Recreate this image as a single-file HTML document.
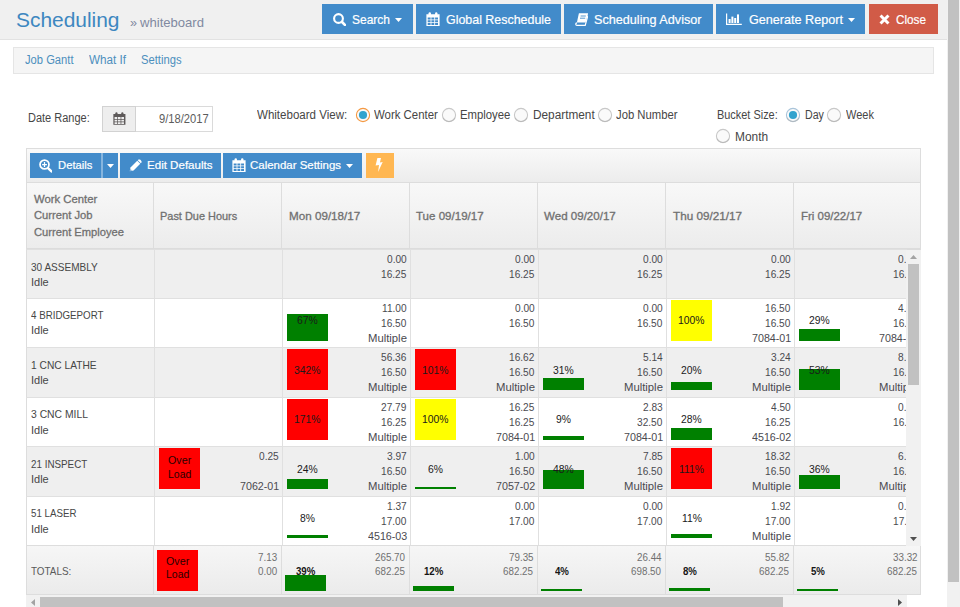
<!DOCTYPE html>
<html><head><meta charset="utf-8"><title>Scheduling whiteboard</title>
<style>
html,body{margin:0;padding:0;}
body{width:960px;height:607px;overflow:hidden;background:#fff;position:relative;font-family:"Liberation Sans",sans-serif;}
#pg{position:absolute;left:0;top:0;width:960px;height:607px;overflow:hidden;}
#pg div,#pg svg{position:absolute;box-sizing:border-box;}
.t{position:absolute;white-space:nowrap;transform-origin:0 50%;display:block;}
</style></head><body><div id="pg">

<div style="left:0px;top:0px;width:947px;height:40px;background:#f0f0f0;border-bottom:1px solid #e2e2e2;"></div>
<div style="left:947px;top:0px;width:13px;height:607px;background:#f1f1f1;"></div>
<div style="left:948px;top:0px;width:11px;height:582px;background:#c1c1c1;"></div>
<div style="left:322px;top:4px;width:91px;height:30px;background:#428bca;"></div>
<svg style="left:333.0px;top:13.2px" width="13" height="13" viewBox="0 0 13 13"><circle cx="5.5" cy="5.5" r="4.4" fill="none" stroke="#fff" stroke-width="2.1"/><path d="M9 9 L11.9 11.9" stroke="#fff" stroke-width="2.7" stroke-linecap="round"/></svg>
<svg style="left:395.3px;top:18.3px" width="7" height="4" viewBox="0 0 7 4"><path d="M0 0 H7 L3.5 4 Z" fill="#fff"/></svg>
<div style="left:416px;top:4px;width:145px;height:30px;background:#428bca;"></div>
<svg style="left:426.4px;top:12.0px" width="14" height="14" viewBox="0 0 14 14"><path fill="#fff" fill-rule="evenodd" d="M0.4 2.3 H13.6 V14 H0.4 Z M1.70 5.60 h2.9 v1.95 h-2.9 Z M5.40 5.60 h2.9 v1.95 h-2.9 Z M9.10 5.60 h2.9 v1.95 h-2.9 Z M1.70 8.35 h2.9 v1.95 h-2.9 Z M5.40 8.35 h2.9 v1.95 h-2.9 Z M9.10 8.35 h2.9 v1.95 h-2.9 Z M1.70 11.10 h2.9 v1.95 h-2.9 Z M5.40 11.10 h2.9 v1.95 h-2.9 Z M9.10 11.10 h2.9 v1.95 h-2.9 Z "/><rect x="2.6" y="0.2" width="2.3" height="4.2" rx="1.1" fill="#fff"/><rect x="9.1" y="0.2" width="2.3" height="4.2" rx="1.1" fill="#fff"/></svg>
<div style="left:564px;top:4px;width:148.5px;height:30px;background:#428bca;"></div>
<svg style="left:575.3px;top:12.8px" width="13" height="13" viewBox="0 0 13 13"><path fill="#fff" d="M3.9 0.3 H12.6 C13 0.3 13.1 0.6 13 1 L10.6 9.6 H1.9 Z"/><path fill="none" stroke="#fff" stroke-width="1.2" d="M2 9.8 C0.3 10 0.4 12.4 2 12.4 H10.2 L12.9 2.6"/><path stroke="#428bca" stroke-width="0.9" d="M5.6 3 H10.8 M5 5.2 H10.2"/></svg>
<div style="left:716px;top:4px;width:149px;height:30px;background:#428bca;"></div>
<svg style="left:726.0px;top:13.0px" width="16" height="12" viewBox="0 0 16 12"><path fill="none" stroke="#fff" stroke-width="1.2" d="M0.6 0.5 V11.4 H15.8"/><rect x="2.6" y="6" width="2" height="4" fill="#fff"/><rect x="5.4" y="3.6" width="2" height="6.4" fill="#fff"/><rect x="8.2" y="5" width="2" height="5" fill="#fff"/><rect x="11" y="1.4" width="2" height="8.6" fill="#fff"/></svg>
<svg style="left:848.0px;top:18.3px" width="7" height="4" viewBox="0 0 7 4"><path d="M0 0 H7 L3.5 4 Z" fill="#fff"/></svg>
<div style="left:869px;top:4px;width:69px;height:30px;background:#d15b47;"></div>
<svg style="left:879.0px;top:13.899999999999999px" width="11" height="11" viewBox="0 0 10 10"><path d="M1.4 1.4 L8.6 8.6 M8.6 1.4 L1.4 8.6" stroke="#fff" stroke-width="2.7"/></svg>
<div style="left:13px;top:47px;width:921px;height:27px;background:#f5f5f5;border:1px solid #e5e5e5;"></div>
<div style="left:102px;top:106px;width:111px;height:26px;background:#fff;border:1px solid #dadada;"></div>
<div style="left:102px;top:106px;width:34px;height:26px;background:#eeeeee;border:1px solid #d2d2d2;"></div>
<svg style="left:112.8px;top:112.1px" width="12.8" height="12.8" viewBox="0 0 14 14"><path fill="#5e5a5a" fill-rule="evenodd" d="M0.4 2.3 H13.6 V14 H0.4 Z M1.70 5.60 h2.9 v1.95 h-2.9 Z M5.40 5.60 h2.9 v1.95 h-2.9 Z M9.10 5.60 h2.9 v1.95 h-2.9 Z M1.70 8.35 h2.9 v1.95 h-2.9 Z M5.40 8.35 h2.9 v1.95 h-2.9 Z M9.10 8.35 h2.9 v1.95 h-2.9 Z M1.70 11.10 h2.9 v1.95 h-2.9 Z M5.40 11.10 h2.9 v1.95 h-2.9 Z M9.10 11.10 h2.9 v1.95 h-2.9 Z "/><rect x="2.6" y="0.2" width="2.3" height="4.2" rx="1.1" fill="#5e5a5a"/><rect x="9.1" y="0.2" width="2.3" height="4.2" rx="1.1" fill="#5e5a5a"/></svg>
<svg style="left:355.1px;top:106.5px" width="16" height="16" viewBox="0 0 16 16"><circle cx="8" cy="8" r="6.6" fill="#fafafa" stroke="#f59942" stroke-width="1.1"/><circle cx="8" cy="8" r="4.1" fill="#32a3ce"/></svg>
<svg style="left:440.5px;top:106.7px" width="16" height="16" viewBox="0 0 16 16"><circle cx="8" cy="8" r="6.6" fill="#fafafa" stroke="#c8c8c8" stroke-width="1.1"/><path d="M2.2 11 A6.6 6.6 0 0 0 13.8 11" fill="none" stroke="#b4b4b4" stroke-width="1.1" opacity="0.7"/></svg>
<svg style="left:513.2px;top:107px" width="16" height="16" viewBox="0 0 16 16"><circle cx="8" cy="8" r="6.6" fill="#fafafa" stroke="#c8c8c8" stroke-width="1.1"/><path d="M2.2 11 A6.6 6.6 0 0 0 13.8 11" fill="none" stroke="#b4b4b4" stroke-width="1.1" opacity="0.7"/></svg>
<svg style="left:596.5px;top:107px" width="16" height="16" viewBox="0 0 16 16"><circle cx="8" cy="8" r="6.6" fill="#fafafa" stroke="#c8c8c8" stroke-width="1.1"/><path d="M2.2 11 A6.6 6.6 0 0 0 13.8 11" fill="none" stroke="#b4b4b4" stroke-width="1.1" opacity="0.7"/></svg>
<svg style="left:785px;top:107px" width="16" height="16" viewBox="0 0 16 16"><circle cx="8" cy="8" r="6.6" fill="#fafafa" stroke="#a9c4da" stroke-width="1.1"/><path d="M2.2 11 A6.6 6.6 0 0 0 13.8 11" fill="none" stroke="#b4b4b4" stroke-width="1.1" opacity="0.7"/><circle cx="8" cy="8" r="4.1" fill="#32a3ce"/></svg>
<svg style="left:826.4px;top:107px" width="16" height="16" viewBox="0 0 16 16"><circle cx="8" cy="8" r="6.6" fill="#fafafa" stroke="#c8c8c8" stroke-width="1.1"/><path d="M2.2 11 A6.6 6.6 0 0 0 13.8 11" fill="none" stroke="#b4b4b4" stroke-width="1.1" opacity="0.7"/></svg>
<svg style="left:715px;top:128.4px" width="16" height="16" viewBox="0 0 16 16"><circle cx="8" cy="8" r="6.6" fill="#fafafa" stroke="#c8c8c8" stroke-width="1.1"/><path d="M2.2 11 A6.6 6.6 0 0 0 13.8 11" fill="none" stroke="#b4b4b4" stroke-width="1.1" opacity="0.7"/></svg>
<div style="left:26px;top:148px;width:895px;height:35px;background:linear-gradient(#f9f9f9,#ececec);border:1px solid #dddddd;"></div>
<div style="left:30px;top:153px;width:71px;height:25px;background:#428bca;"></div>
<div style="left:101px;top:153px;width:2px;height:25px;background:#86b5de;"></div>
<svg style="left:38.95px;top:159.05px" width="13.5" height="13.5" viewBox="0 0 13 13"><circle cx="5.3" cy="5.3" r="4.3" fill="none" stroke="#fff" stroke-width="1.7"/><path d="M8.7 8.7 L12 12" stroke="#fff" stroke-width="2.3" stroke-linecap="round"/><path d="M3 5.3 H7.6 M5.3 3 V7.6" stroke="#fff" stroke-width="1.2"/></svg>
<div style="left:103px;top:153px;width:15px;height:25px;background:#428bca;"></div>
<svg style="left:107.0px;top:164.0px" width="7" height="4" viewBox="0 0 7 4"><path d="M0 0 H7 L3.5 4 Z" fill="#fff"/></svg>
<div style="left:120px;top:153px;width:101px;height:25px;background:#428bca;"></div>
<svg style="left:128.8px;top:158.5px" width="13" height="13" viewBox="0 0 12 12"><path fill="#fff" d="M7.6 1.6 L10.4 4.4 L4.2 10.6 L0.7 11.3 L1.4 7.8 Z"/><path fill="#fff" d="M8.4 0.8 C9 0.2 9.9 0.2 10.5 0.8 L11.2 1.5 C11.8 2.1 11.8 3 11.2 3.6 L10.9 3.9 L8.1 1.1 Z"/><path fill="#428bca" d="M1.3 9.3 L2.7 10.7 L1 11 Z" opacity="0.9"/></svg>
<div style="left:223px;top:153px;width:139px;height:25px;background:#428bca;"></div>
<svg style="left:231.9px;top:157.9px" width="14" height="14" viewBox="0 0 14 14"><path fill="#fff" fill-rule="evenodd" d="M0.4 2.3 H13.6 V14 H0.4 Z M1.70 5.60 h2.9 v1.95 h-2.9 Z M5.40 5.60 h2.9 v1.95 h-2.9 Z M9.10 5.60 h2.9 v1.95 h-2.9 Z M1.70 8.35 h2.9 v1.95 h-2.9 Z M5.40 8.35 h2.9 v1.95 h-2.9 Z M9.10 8.35 h2.9 v1.95 h-2.9 Z M1.70 11.10 h2.9 v1.95 h-2.9 Z M5.40 11.10 h2.9 v1.95 h-2.9 Z M9.10 11.10 h2.9 v1.95 h-2.9 Z "/><rect x="2.6" y="0.2" width="2.3" height="4.2" rx="1.1" fill="#fff"/><rect x="9.1" y="0.2" width="2.3" height="4.2" rx="1.1" fill="#fff"/></svg>
<svg style="left:346.0px;top:164.0px" width="7" height="4" viewBox="0 0 7 4"><path d="M0 0 H7 L3.5 4 Z" fill="#fff"/></svg>
<div style="left:366px;top:153px;width:28px;height:25px;background:#ffb752;"></div>
<svg style="left:375.0px;top:158.4px" width="8" height="14" viewBox="0 0 8 14"><path fill="#fff" d="M2.4 0 H6 L4.9 4.4 L7.7 3.9 L3.1 14 L4 7 L0.6 7.6 Z"/></svg>
<div style="left:26px;top:182px;width:895px;height:68px;background:linear-gradient(#f8f8f8,#ececec);border:1px solid #dddddd;border-bottom:2px solid #dcdcdc;"></div>
<div style="left:153px;top:183px;width:1px;height:65px;background:#dddddd;"></div>
<div style="left:281px;top:183px;width:1px;height:65px;background:#dddddd;"></div>
<div style="left:409px;top:183px;width:1px;height:65px;background:#dddddd;"></div>
<div style="left:537px;top:183px;width:1px;height:65px;background:#dddddd;"></div>
<div style="left:665px;top:183px;width:1px;height:65px;background:#dddddd;"></div>
<div style="left:793px;top:183px;width:1px;height:65px;background:#dddddd;"></div>
<div style="left:26px;top:249px;width:881px;height:49px;background:#efefef;border-top:1px solid #e0e0e0;border-left:1px solid #dddddd;"></div>
<div style="left:154px;top:249px;width:1px;height:49px;background:#e0e0e0;"></div>
<div style="left:282px;top:249px;width:1px;height:49px;background:#e0e0e0;"></div>
<div style="left:410px;top:249px;width:1px;height:49px;background:#e0e0e0;"></div>
<div style="left:538px;top:249px;width:1px;height:49px;background:#e0e0e0;"></div>
<div style="left:666px;top:249px;width:1px;height:49px;background:#e0e0e0;"></div>
<div style="left:794px;top:249px;width:1px;height:49px;background:#e0e0e0;"></div>
<div style="left:26px;top:298px;width:881px;height:49px;background:#ffffff;border-top:1px solid #e0e0e0;border-left:1px solid #dddddd;"></div>
<div style="left:154px;top:298px;width:1px;height:49px;background:#e0e0e0;"></div>
<div style="left:282px;top:298px;width:1px;height:49px;background:#e0e0e0;"></div>
<div style="left:410px;top:298px;width:1px;height:49px;background:#e0e0e0;"></div>
<div style="left:538px;top:298px;width:1px;height:49px;background:#e0e0e0;"></div>
<div style="left:666px;top:298px;width:1px;height:49px;background:#e0e0e0;"></div>
<div style="left:794px;top:298px;width:1px;height:49px;background:#e0e0e0;"></div>
<div style="left:26px;top:347px;width:881px;height:50px;background:#efefef;border-top:1px solid #e0e0e0;border-left:1px solid #dddddd;"></div>
<div style="left:154px;top:347px;width:1px;height:50px;background:#e0e0e0;"></div>
<div style="left:282px;top:347px;width:1px;height:50px;background:#e0e0e0;"></div>
<div style="left:410px;top:347px;width:1px;height:50px;background:#e0e0e0;"></div>
<div style="left:538px;top:347px;width:1px;height:50px;background:#e0e0e0;"></div>
<div style="left:666px;top:347px;width:1px;height:50px;background:#e0e0e0;"></div>
<div style="left:794px;top:347px;width:1px;height:50px;background:#e0e0e0;"></div>
<div style="left:26px;top:397px;width:881px;height:49px;background:#ffffff;border-top:1px solid #e0e0e0;border-left:1px solid #dddddd;"></div>
<div style="left:154px;top:397px;width:1px;height:49px;background:#e0e0e0;"></div>
<div style="left:282px;top:397px;width:1px;height:49px;background:#e0e0e0;"></div>
<div style="left:410px;top:397px;width:1px;height:49px;background:#e0e0e0;"></div>
<div style="left:538px;top:397px;width:1px;height:49px;background:#e0e0e0;"></div>
<div style="left:666px;top:397px;width:1px;height:49px;background:#e0e0e0;"></div>
<div style="left:794px;top:397px;width:1px;height:49px;background:#e0e0e0;"></div>
<div style="left:26px;top:446px;width:881px;height:50px;background:#efefef;border-top:1px solid #e0e0e0;border-left:1px solid #dddddd;"></div>
<div style="left:154px;top:446px;width:1px;height:50px;background:#e0e0e0;"></div>
<div style="left:282px;top:446px;width:1px;height:50px;background:#e0e0e0;"></div>
<div style="left:410px;top:446px;width:1px;height:50px;background:#e0e0e0;"></div>
<div style="left:538px;top:446px;width:1px;height:50px;background:#e0e0e0;"></div>
<div style="left:666px;top:446px;width:1px;height:50px;background:#e0e0e0;"></div>
<div style="left:794px;top:446px;width:1px;height:50px;background:#e0e0e0;"></div>
<div style="left:26px;top:496px;width:881px;height:50px;background:#ffffff;border-top:1px solid #e0e0e0;border-left:1px solid #dddddd;"></div>
<div style="left:154px;top:496px;width:1px;height:50px;background:#e0e0e0;"></div>
<div style="left:282px;top:496px;width:1px;height:50px;background:#e0e0e0;"></div>
<div style="left:410px;top:496px;width:1px;height:50px;background:#e0e0e0;"></div>
<div style="left:538px;top:496px;width:1px;height:50px;background:#e0e0e0;"></div>
<div style="left:666px;top:496px;width:1px;height:50px;background:#e0e0e0;"></div>
<div style="left:794px;top:496px;width:1px;height:50px;background:#e0e0e0;"></div>
<div style="left:287px;top:314px;width:41px;height:27px;background:#008000;"></div>
<div style="left:671px;top:300px;width:41px;height:41px;background:#ffff00;"></div>
<div style="left:799px;top:329px;width:41px;height:12px;background:#008000;"></div>
<div style="left:287px;top:349px;width:41px;height:41px;background:#ff0000;"></div>
<div style="left:415px;top:349px;width:41px;height:41px;background:#ff0000;"></div>
<div style="left:543px;top:378px;width:41px;height:12px;background:#008000;"></div>
<div style="left:671px;top:382px;width:41px;height:8px;background:#008000;"></div>
<div style="left:799px;top:369px;width:41px;height:21px;background:#008000;"></div>
<div style="left:287px;top:399px;width:41px;height:41px;background:#ff0000;"></div>
<div style="left:415px;top:399px;width:41px;height:41px;background:#ffff00;"></div>
<div style="left:543px;top:436px;width:41px;height:4px;background:#008000;"></div>
<div style="left:671px;top:428px;width:41px;height:12px;background:#008000;"></div>
<div style="left:159px;top:448px;width:41px;height:41px;background:#ff0000;"></div>
<div style="left:287px;top:479px;width:41px;height:10px;background:#008000;"></div>
<div style="left:415px;top:487px;width:41px;height:2px;background:#008000;"></div>
<div style="left:543px;top:470px;width:41px;height:19px;background:#008000;"></div>
<div style="left:671px;top:448px;width:41px;height:41px;background:#ff0000;"></div>
<div style="left:799px;top:475px;width:41px;height:14px;background:#008000;"></div>
<div style="left:287px;top:535px;width:41px;height:3px;background:#008000;"></div>
<div style="left:671px;top:534px;width:41px;height:4px;background:#008000;"></div>
<div style="left:26px;top:545px;width:895px;height:50px;background:linear-gradient(#f6f6f6,#ebebeb);border:1px solid #dddddd;"></div>
<div style="left:153px;top:546px;width:1px;height:48px;background:#dddddd;"></div>
<div style="left:281px;top:546px;width:1px;height:48px;background:#dddddd;"></div>
<div style="left:409px;top:546px;width:1px;height:48px;background:#dddddd;"></div>
<div style="left:537px;top:546px;width:1px;height:48px;background:#dddddd;"></div>
<div style="left:665px;top:546px;width:1px;height:48px;background:#dddddd;"></div>
<div style="left:793px;top:546px;width:1px;height:48px;background:#dddddd;"></div>
<div style="left:157px;top:550px;width:41px;height:41px;background:#ff0000;"></div>
<div style="left:285px;top:575px;width:41px;height:16px;background:#008000;"></div>
<div style="left:413px;top:586px;width:41px;height:5px;background:#008000;"></div>
<div style="left:541px;top:589px;width:41px;height:2px;background:#008000;"></div>
<div style="left:669px;top:588px;width:41px;height:3px;background:#008000;"></div>
<div style="left:797px;top:589px;width:41px;height:2px;background:#008000;"></div>
<div style="left:26px;top:595px;width:881px;height:12px;background:#f1f1f1;"></div>
<div style="left:40px;top:597px;width:743px;height:10px;background:#c1c1c1;"></div>
<svg style="left:30.5px;top:599px" width="4" height="7" viewBox="0 0 4 7"><path d="M4 0 V7 L0 3.5 Z" fill="#a3a3a3"/></svg>
<svg style="left:897.5px;top:599px" width="4" height="7" viewBox="0 0 4 7"><path d="M0 0 V7 L4 3.5 Z" fill="#505050"/></svg>
<span class="t" style="top:5.80px;line-height:28px;font-size:19.8px;color:#3d87c0;left:16.00px;transform:scaleX(1.0573);">Scheduling</span>
<span class="t" style="top:13.00px;line-height:19px;font-size:13px;color:#8089a0;left:129.50px;transform:scaleX(0.9676);">»</span>
<span class="t" style="top:12.50px;line-height:20px;font-size:13.5px;color:#8089a0;left:140.00px;transform:scaleX(0.9690);">whiteboard</span>
<span class="t" style="top:9.70px;line-height:19px;font-size:13px;color:#fff;-webkit-text-stroke:0.2px #fff;left:351.60px;transform:scaleX(0.9223);">Search</span>
<span class="t" style="top:9.70px;line-height:19px;font-size:13px;color:#fff;-webkit-text-stroke:0.2px #fff;left:445.50px;transform:scaleX(0.9558);">Global Reschedule</span>
<span class="t" style="top:9.70px;line-height:19px;font-size:13px;color:#fff;-webkit-text-stroke:0.2px #fff;left:594.00px;transform:scaleX(0.9722);">Scheduling Advisor</span>
<span class="t" style="top:9.70px;line-height:19px;font-size:13px;color:#fff;-webkit-text-stroke:0.2px #fff;left:748.50px;transform:scaleX(0.9706);">Generate Report</span>
<span class="t" style="top:9.70px;line-height:19px;font-size:13px;color:#fff;-webkit-text-stroke:0.2px #fff;left:896.00px;transform:scaleX(0.9023);">Close</span>
<span class="t" style="top:51.00px;line-height:18px;font-size:12px;color:#4c8fbd;left:24.50px;transform:scaleX(0.9321);">Job Gantt</span>
<span class="t" style="top:51.00px;line-height:18px;font-size:12px;color:#4c8fbd;left:88.50px;transform:scaleX(0.9733);">What If</span>
<span class="t" style="top:51.00px;line-height:18px;font-size:12px;color:#4c8fbd;left:141.00px;transform:scaleX(0.9341);">Settings</span>
<span class="t" style="top:108.50px;line-height:18px;font-size:12px;color:#464646;left:27.50px;transform:scaleX(0.9156);">Date Range:</span>
<span class="t" style="top:109.90px;line-height:18px;font-size:12px;color:#5c5c5c;left:159.00px;transform:scaleX(0.9309);">9/18/2017</span>
<span class="t" style="top:106.00px;line-height:18px;font-size:12px;color:#464646;left:256.50px;transform:scaleX(0.9613);">Whiteboard View:</span>
<span class="t" style="top:106.00px;line-height:18px;font-size:12px;color:#464646;left:374.00px;transform:scaleX(0.9517);">Work Center</span>
<span class="t" style="top:106.00px;line-height:18px;font-size:12px;color:#464646;left:459.60px;transform:scaleX(0.9443);">Employee</span>
<span class="t" style="top:106.00px;line-height:18px;font-size:12px;color:#464646;left:532.50px;transform:scaleX(0.9840);">Department</span>
<span class="t" style="top:106.00px;line-height:18px;font-size:12px;color:#464646;left:616.00px;transform:scaleX(0.9407);">Job Number</span>
<span class="t" style="top:106.00px;line-height:18px;font-size:12px;color:#464646;left:716.80px;transform:scaleX(0.9100);">Bucket Size:</span>
<span class="t" style="top:106.00px;line-height:18px;font-size:12px;color:#464646;left:805.10px;transform:scaleX(0.8855);">Day</span>
<span class="t" style="top:106.00px;line-height:18px;font-size:12px;color:#464646;left:845.80px;transform:scaleX(0.9157);">Week</span>
<span class="t" style="top:127.50px;line-height:18px;font-size:12px;color:#464646;left:735.20px;transform:scaleX(0.9922);">Month</span>
<span class="t" style="top:157.10px;line-height:17px;font-size:11.2px;color:#fff;-webkit-text-stroke:0.2px #fff;left:57.60px;transform:scaleX(1.0058);">Details</span>
<span class="t" style="top:157.10px;line-height:17px;font-size:11.2px;color:#fff;-webkit-text-stroke:0.2px #fff;left:146.50px;transform:scaleX(1.0325);">Edit Defaults</span>
<span class="t" style="top:157.10px;line-height:17px;font-size:11.2px;color:#fff;-webkit-text-stroke:0.2px #fff;left:250.00px;transform:scaleX(1.0232);">Calendar Settings</span>
<span class="t" style="top:190.50px;line-height:17px;font-size:11.4px;color:#707070;-webkit-text-stroke:0.3px #707070;left:33.70px;transform:scaleX(0.9932);">Work Center</span>
<span class="t" style="top:207.30px;line-height:17px;font-size:11.4px;color:#707070;-webkit-text-stroke:0.3px #707070;left:33.70px;transform:scaleX(0.9829);">Current Job</span>
<span class="t" style="top:224.10px;line-height:17px;font-size:11.4px;color:#707070;-webkit-text-stroke:0.3px #707070;left:33.70px;transform:scaleX(0.9803);">Current Employee</span>
<span class="t" style="top:207.60px;line-height:17px;font-size:11.4px;color:#707070;-webkit-text-stroke:0.3px #707070;left:160.30px;transform:scaleX(0.9601);">Past Due Hours</span>
<span class="t" style="top:207.60px;line-height:17px;font-size:11.4px;color:#707070;-webkit-text-stroke:0.3px #707070;left:288.80px;transform:scaleX(1.0234);">Mon 09/18/17</span>
<span class="t" style="top:207.60px;line-height:17px;font-size:11.4px;color:#707070;-webkit-text-stroke:0.3px #707070;left:416.30px;transform:scaleX(1.0132);">Tue 09/19/17</span>
<span class="t" style="top:207.60px;line-height:17px;font-size:11.4px;color:#707070;-webkit-text-stroke:0.3px #707070;left:544.40px;transform:scaleX(1.0153);">Wed 09/20/17</span>
<span class="t" style="top:207.60px;line-height:17px;font-size:11.4px;color:#707070;-webkit-text-stroke:0.3px #707070;left:672.60px;transform:scaleX(1.0277);">Thu 09/21/17</span>
<span class="t" style="top:207.60px;line-height:17px;font-size:11.4px;color:#707070;-webkit-text-stroke:0.3px #707070;left:800.80px;transform:scaleX(1.0066);">Fri 09/22/17</span>
<span class="t" style="top:258.60px;line-height:17px;font-size:11.5px;color:#464646;left:30.80px;transform:scaleX(0.8719);">30 ASSEMBLY</span>
<span class="t" style="top:273.80px;line-height:17px;font-size:11.5px;color:#464646;left:30.80px;transform:scaleX(0.9543);">Idle</span>
<span class="t" style="top:306.90px;line-height:17px;font-size:11.5px;color:#464646;left:30.80px;transform:scaleX(0.8487);">4 BRIDGEPORT</span>
<span class="t" style="top:322.30px;line-height:17px;font-size:11.5px;color:#464646;left:30.80px;transform:scaleX(0.9543);">Idle</span>
<span class="t" style="top:356.50px;line-height:17px;font-size:11.5px;color:#464646;left:30.80px;transform:scaleX(0.8874);">1 CNC LATHE</span>
<span class="t" style="top:371.70px;line-height:17px;font-size:11.5px;color:#464646;left:30.80px;transform:scaleX(0.9543);">Idle</span>
<span class="t" style="top:406.10px;line-height:17px;font-size:11.5px;color:#464646;left:30.80px;transform:scaleX(0.9007);">3 CNC MILL</span>
<span class="t" style="top:421.50px;line-height:17px;font-size:11.5px;color:#464646;left:30.80px;transform:scaleX(0.9543);">Idle</span>
<span class="t" style="top:455.50px;line-height:17px;font-size:11.5px;color:#464646;left:30.80px;transform:scaleX(0.8545);">21 INSPECT</span>
<span class="t" style="top:470.70px;line-height:17px;font-size:11.5px;color:#464646;left:30.80px;transform:scaleX(0.9543);">Idle</span>
<span class="t" style="top:505.00px;line-height:17px;font-size:11.5px;color:#464646;left:30.80px;transform:scaleX(0.8454);">51 LASER</span>
<span class="t" style="top:520.50px;line-height:17px;font-size:11.5px;color:#464646;left:30.80px;transform:scaleX(0.9543);">Idle</span>
<span class="t" style="top:250.70px;line-height:17px;font-size:11.5px;color:#4a4a50;left:387.10px;transform:scaleX(0.8800);">0.00</span>
<span class="t" style="top:265.80px;line-height:17px;font-size:11.5px;color:#4a4a50;left:381.47px;transform:scaleX(0.8800);">16.25</span>
<span class="t" style="top:250.70px;line-height:17px;font-size:11.5px;color:#4a4a50;left:515.10px;transform:scaleX(0.8800);">0.00</span>
<span class="t" style="top:265.80px;line-height:17px;font-size:11.5px;color:#4a4a50;left:509.47px;transform:scaleX(0.8800);">16.25</span>
<span class="t" style="top:250.70px;line-height:17px;font-size:11.5px;color:#4a4a50;left:643.10px;transform:scaleX(0.8800);">0.00</span>
<span class="t" style="top:265.80px;line-height:17px;font-size:11.5px;color:#4a4a50;left:637.47px;transform:scaleX(0.8800);">16.25</span>
<span class="t" style="top:250.70px;line-height:17px;font-size:11.5px;color:#4a4a50;left:771.10px;transform:scaleX(0.8800);">0.00</span>
<span class="t" style="top:265.80px;line-height:17px;font-size:11.5px;color:#4a4a50;left:765.47px;transform:scaleX(0.8800);">16.25</span>
<span class="t" style="top:250.70px;line-height:17px;font-size:11.5px;color:#4a4a50;left:898.30px;transform:scaleX(0.8800);">0.00</span>
<span class="t" style="top:265.80px;line-height:17px;font-size:11.5px;color:#4a4a50;left:892.67px;transform:scaleX(0.8800);">16.25</span>
<span class="t" style="top:312.40px;line-height:17px;font-size:11.5px;color:#1a1a1a;left:297.24px;transform:scaleX(0.9000);">67%</span>
<span class="t" style="top:299.80px;line-height:17px;font-size:11.5px;color:#4a4a50;left:382.22px;transform:scaleX(0.8800);">11.00</span>
<span class="t" style="top:314.90px;line-height:17px;font-size:11.5px;color:#4a4a50;left:381.47px;transform:scaleX(0.8800);">16.50</span>
<span class="t" style="top:330.00px;line-height:17px;font-size:11.5px;color:#4a4a50;left:367.87px;transform:scaleX(0.9820);">Multiple</span>
<span class="t" style="top:299.80px;line-height:17px;font-size:11.5px;color:#4a4a50;left:515.10px;transform:scaleX(0.8800);">0.00</span>
<span class="t" style="top:314.90px;line-height:17px;font-size:11.5px;color:#4a4a50;left:509.47px;transform:scaleX(0.8800);">16.50</span>
<span class="t" style="top:299.80px;line-height:17px;font-size:11.5px;color:#4a4a50;left:643.10px;transform:scaleX(0.8800);">0.00</span>
<span class="t" style="top:314.90px;line-height:17px;font-size:11.5px;color:#4a4a50;left:637.47px;transform:scaleX(0.8800);">16.50</span>
<span class="t" style="top:312.40px;line-height:17px;font-size:11.5px;color:#1a1a1a;left:678.36px;transform:scaleX(0.9000);">100%</span>
<span class="t" style="top:299.80px;line-height:17px;font-size:11.5px;color:#4a4a50;left:765.47px;transform:scaleX(0.8800);">16.50</span>
<span class="t" style="top:314.90px;line-height:17px;font-size:11.5px;color:#4a4a50;left:765.47px;transform:scaleX(0.8800);">16.50</span>
<span class="t" style="top:330.00px;line-height:17px;font-size:11.5px;color:#4a4a50;left:751.54px;transform:scaleX(0.9300);">7084-01</span>
<span class="t" style="top:312.40px;line-height:17px;font-size:11.5px;color:#1a1a1a;left:809.34px;transform:scaleX(0.9000);">29%</span>
<span class="t" style="top:299.80px;line-height:17px;font-size:11.5px;color:#4a4a50;left:898.30px;transform:scaleX(0.8800);">4.75</span>
<span class="t" style="top:314.90px;line-height:17px;font-size:11.5px;color:#4a4a50;left:892.67px;transform:scaleX(0.8800);">16.50</span>
<span class="t" style="top:330.00px;line-height:17px;font-size:11.5px;color:#4a4a50;left:878.74px;transform:scaleX(0.9300);">7084-01</span>
<span class="t" style="top:361.80px;line-height:17px;font-size:11.5px;color:#1a1a1a;left:294.36px;transform:scaleX(0.9000);">342%</span>
<span class="t" style="top:348.70px;line-height:17px;font-size:11.5px;color:#4a4a50;left:381.47px;transform:scaleX(0.8800);">56.36</span>
<span class="t" style="top:363.80px;line-height:17px;font-size:11.5px;color:#4a4a50;left:381.47px;transform:scaleX(0.8800);">16.50</span>
<span class="t" style="top:378.90px;line-height:17px;font-size:11.5px;color:#4a4a50;left:367.87px;transform:scaleX(0.9820);">Multiple</span>
<span class="t" style="top:361.80px;line-height:17px;font-size:11.5px;color:#1a1a1a;left:422.36px;transform:scaleX(0.9000);">101%</span>
<span class="t" style="top:348.70px;line-height:17px;font-size:11.5px;color:#4a4a50;left:509.47px;transform:scaleX(0.8800);">16.62</span>
<span class="t" style="top:363.80px;line-height:17px;font-size:11.5px;color:#4a4a50;left:509.47px;transform:scaleX(0.8800);">16.50</span>
<span class="t" style="top:378.90px;line-height:17px;font-size:11.5px;color:#4a4a50;left:495.87px;transform:scaleX(0.9820);">Multiple</span>
<span class="t" style="top:361.80px;line-height:17px;font-size:11.5px;color:#1a1a1a;left:553.24px;transform:scaleX(0.9000);">31%</span>
<span class="t" style="top:348.70px;line-height:17px;font-size:11.5px;color:#4a4a50;left:643.10px;transform:scaleX(0.8800);">5.14</span>
<span class="t" style="top:363.80px;line-height:17px;font-size:11.5px;color:#4a4a50;left:637.47px;transform:scaleX(0.8800);">16.50</span>
<span class="t" style="top:378.90px;line-height:17px;font-size:11.5px;color:#4a4a50;left:623.87px;transform:scaleX(0.9820);">Multiple</span>
<span class="t" style="top:361.80px;line-height:17px;font-size:11.5px;color:#1a1a1a;left:681.24px;transform:scaleX(0.9000);">20%</span>
<span class="t" style="top:348.70px;line-height:17px;font-size:11.5px;color:#4a4a50;left:771.10px;transform:scaleX(0.8800);">3.24</span>
<span class="t" style="top:363.80px;line-height:17px;font-size:11.5px;color:#4a4a50;left:765.47px;transform:scaleX(0.8800);">16.50</span>
<span class="t" style="top:378.90px;line-height:17px;font-size:11.5px;color:#4a4a50;left:751.87px;transform:scaleX(0.9820);">Multiple</span>
<span class="t" style="top:361.80px;line-height:17px;font-size:11.5px;color:#1a1a1a;left:809.34px;transform:scaleX(0.9000);">53%</span>
<span class="t" style="top:348.70px;line-height:17px;font-size:11.5px;color:#4a4a50;left:898.30px;transform:scaleX(0.8800);">8.75</span>
<span class="t" style="top:363.80px;line-height:17px;font-size:11.5px;color:#4a4a50;left:892.67px;transform:scaleX(0.8800);">16.50</span>
<span class="t" style="top:378.90px;line-height:17px;font-size:11.5px;color:#4a4a50;left:879.07px;transform:scaleX(0.9820);">Multiple</span>
<span class="t" style="top:411.40px;line-height:17px;font-size:11.5px;color:#1a1a1a;left:294.36px;transform:scaleX(0.9000);">171%</span>
<span class="t" style="top:398.60px;line-height:17px;font-size:11.5px;color:#4a4a50;left:381.47px;transform:scaleX(0.8800);">27.79</span>
<span class="t" style="top:413.70px;line-height:17px;font-size:11.5px;color:#4a4a50;left:381.47px;transform:scaleX(0.8800);">16.25</span>
<span class="t" style="top:428.80px;line-height:17px;font-size:11.5px;color:#4a4a50;left:367.87px;transform:scaleX(0.9820);">Multiple</span>
<span class="t" style="top:411.40px;line-height:17px;font-size:11.5px;color:#1a1a1a;left:422.36px;transform:scaleX(0.9000);">100%</span>
<span class="t" style="top:398.60px;line-height:17px;font-size:11.5px;color:#4a4a50;left:509.47px;transform:scaleX(0.8800);">16.25</span>
<span class="t" style="top:413.70px;line-height:17px;font-size:11.5px;color:#4a4a50;left:509.47px;transform:scaleX(0.8800);">16.25</span>
<span class="t" style="top:428.80px;line-height:17px;font-size:11.5px;color:#4a4a50;left:495.54px;transform:scaleX(0.9300);">7084-01</span>
<span class="t" style="top:411.40px;line-height:17px;font-size:11.5px;color:#1a1a1a;left:556.12px;transform:scaleX(0.9000);">9%</span>
<span class="t" style="top:398.60px;line-height:17px;font-size:11.5px;color:#4a4a50;left:643.10px;transform:scaleX(0.8800);">2.83</span>
<span class="t" style="top:413.70px;line-height:17px;font-size:11.5px;color:#4a4a50;left:637.47px;transform:scaleX(0.8800);">32.50</span>
<span class="t" style="top:428.80px;line-height:17px;font-size:11.5px;color:#4a4a50;left:623.54px;transform:scaleX(0.9300);">7084-01</span>
<span class="t" style="top:411.40px;line-height:17px;font-size:11.5px;color:#1a1a1a;left:681.24px;transform:scaleX(0.9000);">28%</span>
<span class="t" style="top:398.60px;line-height:17px;font-size:11.5px;color:#4a4a50;left:771.10px;transform:scaleX(0.8800);">4.50</span>
<span class="t" style="top:413.70px;line-height:17px;font-size:11.5px;color:#4a4a50;left:765.47px;transform:scaleX(0.8800);">16.25</span>
<span class="t" style="top:428.80px;line-height:17px;font-size:11.5px;color:#4a4a50;left:751.54px;transform:scaleX(0.9300);">4516-02</span>
<span class="t" style="top:398.60px;line-height:17px;font-size:11.5px;color:#4a4a50;left:898.30px;transform:scaleX(0.8800);">0.00</span>
<span class="t" style="top:413.70px;line-height:17px;font-size:11.5px;color:#4a4a50;left:892.67px;transform:scaleX(0.8800);">16.25</span>
<span class="t" style="top:452.30px;line-height:17px;font-size:11.5px;color:#2a0000;left:167.65px;transform:scaleX(0.9349);">Over</span>
<span class="t" style="top:466.10px;line-height:17px;font-size:11.5px;color:#2a0000;left:167.65px;transform:scaleX(0.9104);">Load</span>
<span class="t" style="top:447.55px;line-height:17px;font-size:11.5px;color:#4a4a50;left:259.30px;transform:scaleX(0.8800);">0.25</span>
<span class="t" style="top:477.75px;line-height:17px;font-size:11.5px;color:#4a4a50;left:239.74px;transform:scaleX(0.9300);">7062-01</span>
<span class="t" style="top:460.80px;line-height:17px;font-size:11.5px;color:#1a1a1a;left:297.24px;transform:scaleX(0.9000);">24%</span>
<span class="t" style="top:447.55px;line-height:17px;font-size:11.5px;color:#4a4a50;left:387.10px;transform:scaleX(0.8800);">3.97</span>
<span class="t" style="top:462.65px;line-height:17px;font-size:11.5px;color:#4a4a50;left:381.47px;transform:scaleX(0.8800);">16.50</span>
<span class="t" style="top:477.75px;line-height:17px;font-size:11.5px;color:#4a4a50;left:367.87px;transform:scaleX(0.9820);">Multiple</span>
<span class="t" style="top:460.80px;line-height:17px;font-size:11.5px;color:#1a1a1a;left:428.12px;transform:scaleX(0.9000);">6%</span>
<span class="t" style="top:447.55px;line-height:17px;font-size:11.5px;color:#4a4a50;left:515.10px;transform:scaleX(0.8800);">1.00</span>
<span class="t" style="top:462.65px;line-height:17px;font-size:11.5px;color:#4a4a50;left:509.47px;transform:scaleX(0.8800);">16.50</span>
<span class="t" style="top:477.75px;line-height:17px;font-size:11.5px;color:#4a4a50;left:495.54px;transform:scaleX(0.9300);">7057-02</span>
<span class="t" style="top:460.80px;line-height:17px;font-size:11.5px;color:#1a1a1a;left:553.24px;transform:scaleX(0.9000);">48%</span>
<span class="t" style="top:447.55px;line-height:17px;font-size:11.5px;color:#4a4a50;left:643.10px;transform:scaleX(0.8800);">7.85</span>
<span class="t" style="top:462.65px;line-height:17px;font-size:11.5px;color:#4a4a50;left:637.47px;transform:scaleX(0.8800);">16.50</span>
<span class="t" style="top:477.75px;line-height:17px;font-size:11.5px;color:#4a4a50;left:623.87px;transform:scaleX(0.9820);">Multiple</span>
<span class="t" style="top:460.80px;line-height:17px;font-size:11.5px;color:#1a1a1a;left:679.13px;transform:scaleX(0.9000);">111%</span>
<span class="t" style="top:447.55px;line-height:17px;font-size:11.5px;color:#4a4a50;left:765.47px;transform:scaleX(0.8800);">18.32</span>
<span class="t" style="top:462.65px;line-height:17px;font-size:11.5px;color:#4a4a50;left:765.47px;transform:scaleX(0.8800);">16.50</span>
<span class="t" style="top:477.75px;line-height:17px;font-size:11.5px;color:#4a4a50;left:751.87px;transform:scaleX(0.9820);">Multiple</span>
<span class="t" style="top:460.80px;line-height:17px;font-size:11.5px;color:#1a1a1a;left:809.34px;transform:scaleX(0.9000);">36%</span>
<span class="t" style="top:447.55px;line-height:17px;font-size:11.5px;color:#4a4a50;left:898.30px;transform:scaleX(0.8800);">6.00</span>
<span class="t" style="top:462.65px;line-height:17px;font-size:11.5px;color:#4a4a50;left:892.67px;transform:scaleX(0.8800);">16.50</span>
<span class="t" style="top:477.75px;line-height:17px;font-size:11.5px;color:#4a4a50;left:879.07px;transform:scaleX(0.9820);">Multiple</span>
<span class="t" style="top:510.20px;line-height:17px;font-size:11.5px;color:#1a1a1a;left:300.12px;transform:scaleX(0.9000);">8%</span>
<span class="t" style="top:497.55px;line-height:17px;font-size:11.5px;color:#4a4a50;left:387.10px;transform:scaleX(0.8800);">1.37</span>
<span class="t" style="top:512.65px;line-height:17px;font-size:11.5px;color:#4a4a50;left:381.47px;transform:scaleX(0.8800);">17.00</span>
<span class="t" style="top:527.75px;line-height:17px;font-size:11.5px;color:#4a4a50;left:367.54px;transform:scaleX(0.9300);">4516-03</span>
<span class="t" style="top:497.55px;line-height:17px;font-size:11.5px;color:#4a4a50;left:515.10px;transform:scaleX(0.8800);">0.00</span>
<span class="t" style="top:512.65px;line-height:17px;font-size:11.5px;color:#4a4a50;left:509.47px;transform:scaleX(0.8800);">17.00</span>
<span class="t" style="top:497.55px;line-height:17px;font-size:11.5px;color:#4a4a50;left:643.10px;transform:scaleX(0.8800);">0.00</span>
<span class="t" style="top:512.65px;line-height:17px;font-size:11.5px;color:#4a4a50;left:637.47px;transform:scaleX(0.8800);">17.00</span>
<span class="t" style="top:510.20px;line-height:17px;font-size:11.5px;color:#1a1a1a;left:681.62px;transform:scaleX(0.9000);">11%</span>
<span class="t" style="top:497.55px;line-height:17px;font-size:11.5px;color:#4a4a50;left:771.10px;transform:scaleX(0.8800);">1.92</span>
<span class="t" style="top:512.65px;line-height:17px;font-size:11.5px;color:#4a4a50;left:765.47px;transform:scaleX(0.8800);">17.00</span>
<span class="t" style="top:527.75px;line-height:17px;font-size:11.5px;color:#4a4a50;left:751.87px;transform:scaleX(0.9820);">Multiple</span>
<span class="t" style="top:497.55px;line-height:17px;font-size:11.5px;color:#4a4a50;left:898.30px;transform:scaleX(0.8800);">0.00</span>
<span class="t" style="top:512.65px;line-height:17px;font-size:11.5px;color:#4a4a50;left:892.67px;transform:scaleX(0.8800);">17.00</span>
<span class="t" style="top:562.50px;line-height:17px;font-size:11.5px;color:#5a5a5a;left:30.50px;transform:scaleX(0.8600);">TOTALS:</span>
<span class="t" style="top:552.80px;line-height:17px;font-size:11.5px;color:#2a0000;left:165.65px;transform:scaleX(0.9349);">Over</span>
<span class="t" style="top:566.30px;line-height:17px;font-size:11.5px;color:#2a0000;left:165.65px;transform:scaleX(0.9104);">Load</span>
<span class="t" style="top:548.50px;line-height:17px;font-size:11.5px;color:#707070;left:258.29px;transform:scaleX(0.8536);">7.13</span>
<span class="t" style="top:562.80px;line-height:17px;font-size:11.5px;color:#707070;left:258.29px;transform:scaleX(0.8536);">0.00</span>
<span class="t" style="top:562.50px;line-height:17px;font-size:11.5px;color:#151515;font-weight:bold;left:296.03px;transform:scaleX(0.8400);">39%</span>
<span class="t" style="top:548.50px;line-height:17px;font-size:11.5px;color:#707070;left:375.36px;transform:scaleX(0.8536);">265.70</span>
<span class="t" style="top:562.80px;line-height:17px;font-size:11.5px;color:#707070;left:375.36px;transform:scaleX(0.8536);">682.25</span>
<span class="t" style="top:562.50px;line-height:17px;font-size:11.5px;color:#151515;font-weight:bold;left:424.03px;transform:scaleX(0.8400);">12%</span>
<span class="t" style="top:548.50px;line-height:17px;font-size:11.5px;color:#707070;left:508.83px;transform:scaleX(0.8536);">79.35</span>
<span class="t" style="top:562.80px;line-height:17px;font-size:11.5px;color:#707070;left:503.36px;transform:scaleX(0.8536);">682.25</span>
<span class="t" style="top:562.50px;line-height:17px;font-size:11.5px;color:#151515;font-weight:bold;left:554.72px;transform:scaleX(0.8400);">4%</span>
<span class="t" style="top:548.50px;line-height:17px;font-size:11.5px;color:#707070;left:636.83px;transform:scaleX(0.8536);">26.44</span>
<span class="t" style="top:562.80px;line-height:17px;font-size:11.5px;color:#707070;left:631.36px;transform:scaleX(0.8536);">698.50</span>
<span class="t" style="top:562.50px;line-height:17px;font-size:11.5px;color:#151515;font-weight:bold;left:682.72px;transform:scaleX(0.8400);">8%</span>
<span class="t" style="top:548.50px;line-height:17px;font-size:11.5px;color:#707070;left:764.83px;transform:scaleX(0.8536);">55.82</span>
<span class="t" style="top:562.80px;line-height:17px;font-size:11.5px;color:#707070;left:759.36px;transform:scaleX(0.8536);">682.25</span>
<span class="t" style="top:562.50px;line-height:17px;font-size:11.5px;color:#151515;font-weight:bold;left:810.72px;transform:scaleX(0.8400);">5%</span>
<span class="t" style="top:548.50px;line-height:17px;font-size:11.5px;color:#707070;left:892.83px;transform:scaleX(0.8536);">33.32</span>
<span class="t" style="top:562.80px;line-height:17px;font-size:11.5px;color:#707070;left:887.36px;transform:scaleX(0.8536);">682.25</span>
<div style="left:906px;top:250px;width:15px;height:296px;background:#f1f1f1;"></div>
<div style="left:908px;top:264px;width:11px;height:120.5px;background:#c1c1c1;"></div>
<svg style="left:910px;top:254.5px" width="7" height="4" viewBox="0 0 7 4"><path d="M0 4 H7 L3.5 0 Z" fill="#a3a3a3"/></svg>
<svg style="left:910px;top:536.5px" width="7" height="4" viewBox="0 0 7 4"><path d="M0 0 H7 L3.5 4 Z" fill="#505050"/></svg>

</div></body></html>
